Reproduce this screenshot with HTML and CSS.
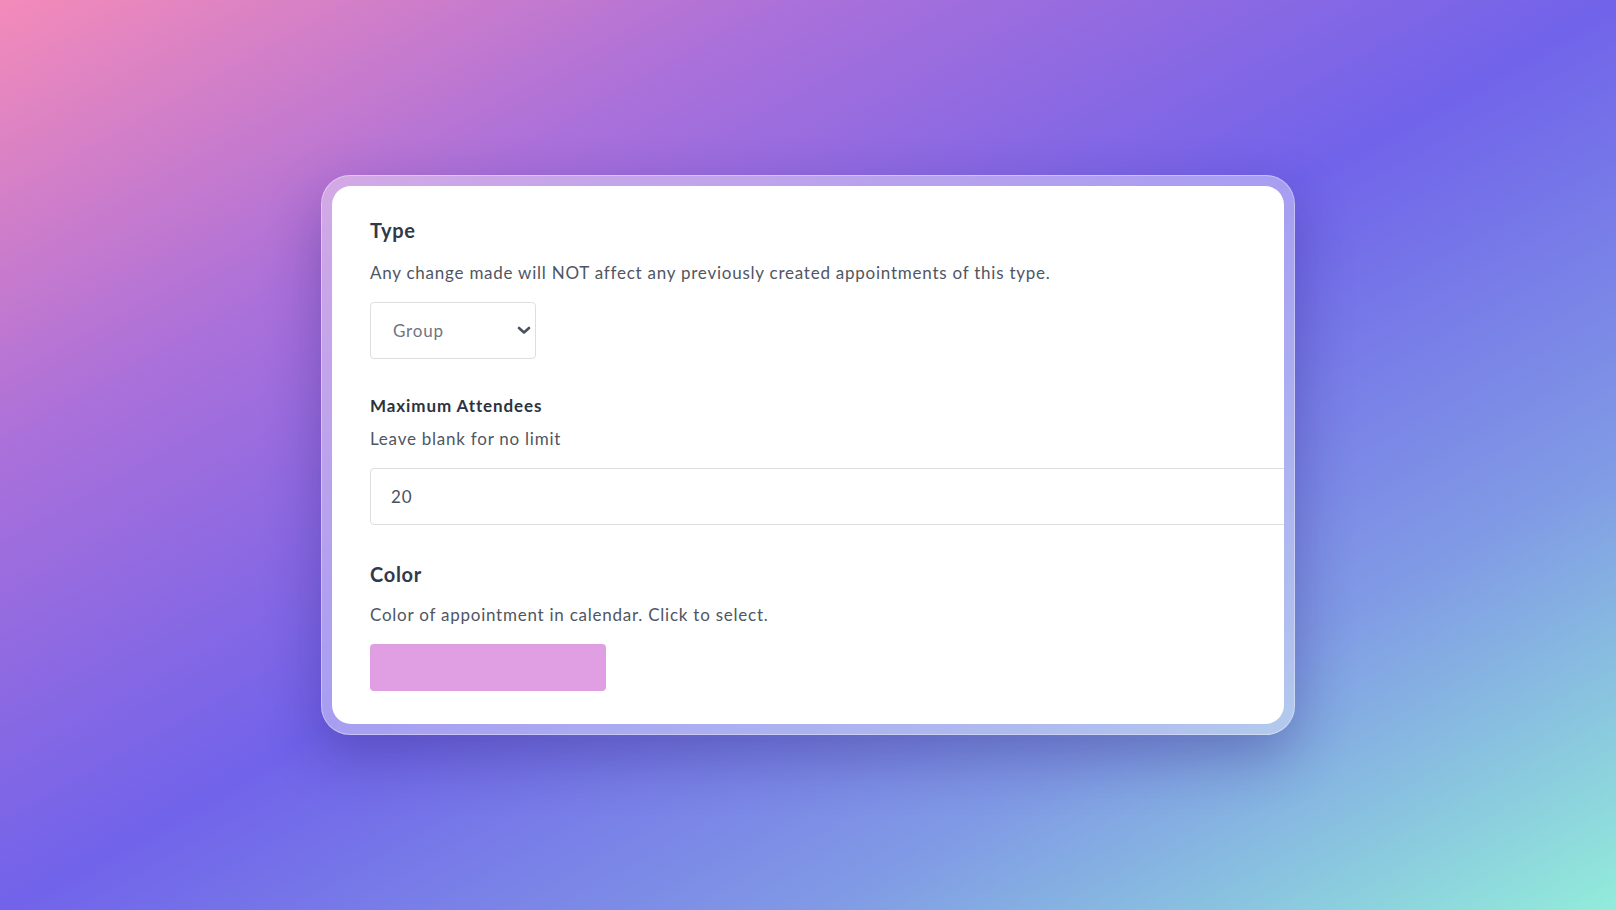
FILE: index.html
```html
<!DOCTYPE html>
<html lang="en">
<head>
<meta charset="utf-8">
<title>Appointment type</title>
<link rel="stylesheet" href="styles.css">
</head>
<body>
<main class="stage">
  <div class="frame">
    <section class="card">
      <h2 class="title">Type</h2>
      <p class="hint hint-after-title">Any change made will NOT affect any previously created appointments of this type.</p>
      <div class="select">
        <span class="select-value">Group</span>
        <svg class="chevron" width="14" height="9" viewBox="0 0 14 9" aria-hidden="true">
          <polyline points="2,2 7,6.5 12,2" fill="none" stroke="#4a5260" stroke-width="2.6" stroke-linecap="round" stroke-linejoin="round"/>
        </svg>
      </div>

      <div class="label">Maximum Attendees</div>
      <p class="hint hint-after-label">Leave blank for no limit</p>
      <div class="input"><span class="input-value">20</span></div>

      <h2 class="title title-color">Color</h2>
      <p class="hint hint-after-title2">Color of appointment in calendar. Click to select.</p>
      <div class="swatch"></div>
    </section>
  </div>
</main>
</body>
</html>
```
FILE: styles.css
```css
* { box-sizing: border-box; }

html, body {
  margin: 0;
  padding: 0;
  height: 100%;
}

body {
  font-family: "Lato", "Liberation Sans", sans-serif;
  background:
    linear-gradient(to bottom right,
      #f48bb9 0%,
      #aa70da 25%,
      #7163ea 50%,
      #8099e5 75%,
      #92ecda 100%);
  overflow: hidden;
}

.stage {
  height: 100vh;
  display: flex;
  align-items: center;
  justify-content: center;
}

.frame {
  width: 974px;
  padding: 10px;
  border: 1px solid rgba(255, 255, 255, 0.35);
  border-radius: 29px;
  background: rgba(255, 255, 255, 0.38);
  box-shadow: 0 22px 55px rgba(35, 25, 110, 0.33);
}

.card {
  background: #ffffff;
  border-radius: 19px;
  padding: 32px 0 33px 38px;
  overflow: hidden;
}

.title {
  margin: 0;
  font-size: 20px;
  line-height: 24px;
  font-weight: 700;
  letter-spacing: 0.7px;
  color: #2f3a4b;
}

.title-color { margin-top: 37px; }

.hint {
  margin: 0;
  font-size: 17px;
  line-height: 20px;
  letter-spacing: 0.76px;
  color: #4f5663;
}

.hint-after-title { margin-top: 21px; }
.hint-after-label { margin-top: 13px; }
.hint-after-title2 { margin-top: 19px; }

.label {
  margin-top: 37px;
  font-size: 17px;
  line-height: 20px;
  font-weight: 700;
  letter-spacing: 0.9px;
  color: #2c3340;
}

.select {
  margin-top: 19px;
  width: 166px;
  height: 57px;
  border: 1px solid #dedede;
  border-radius: 4px;
  display: flex;
  align-items: center;
  justify-content: space-between;
  padding: 0 4px 0 22px;
}

.select-value {
  font-size: 17px;
  letter-spacing: 0.8px;
  color: #6f7581;
}

.chevron { display: block; }

.input {
  margin-top: 19px;
  width: calc(100% + 40px);
  height: 57px;
  border: 1px solid #dedede;
  border-radius: 4px;
  display: flex;
  align-items: center;
  padding-left: 20px;
}

.input-value {
  font-size: 17px;
  letter-spacing: 0.8px;
  color: #4a515d;
}

.swatch {
  margin-top: 19px;
  width: 236px;
  height: 47px;
  border-radius: 4px;
  background: #e09fe3;
}
```
